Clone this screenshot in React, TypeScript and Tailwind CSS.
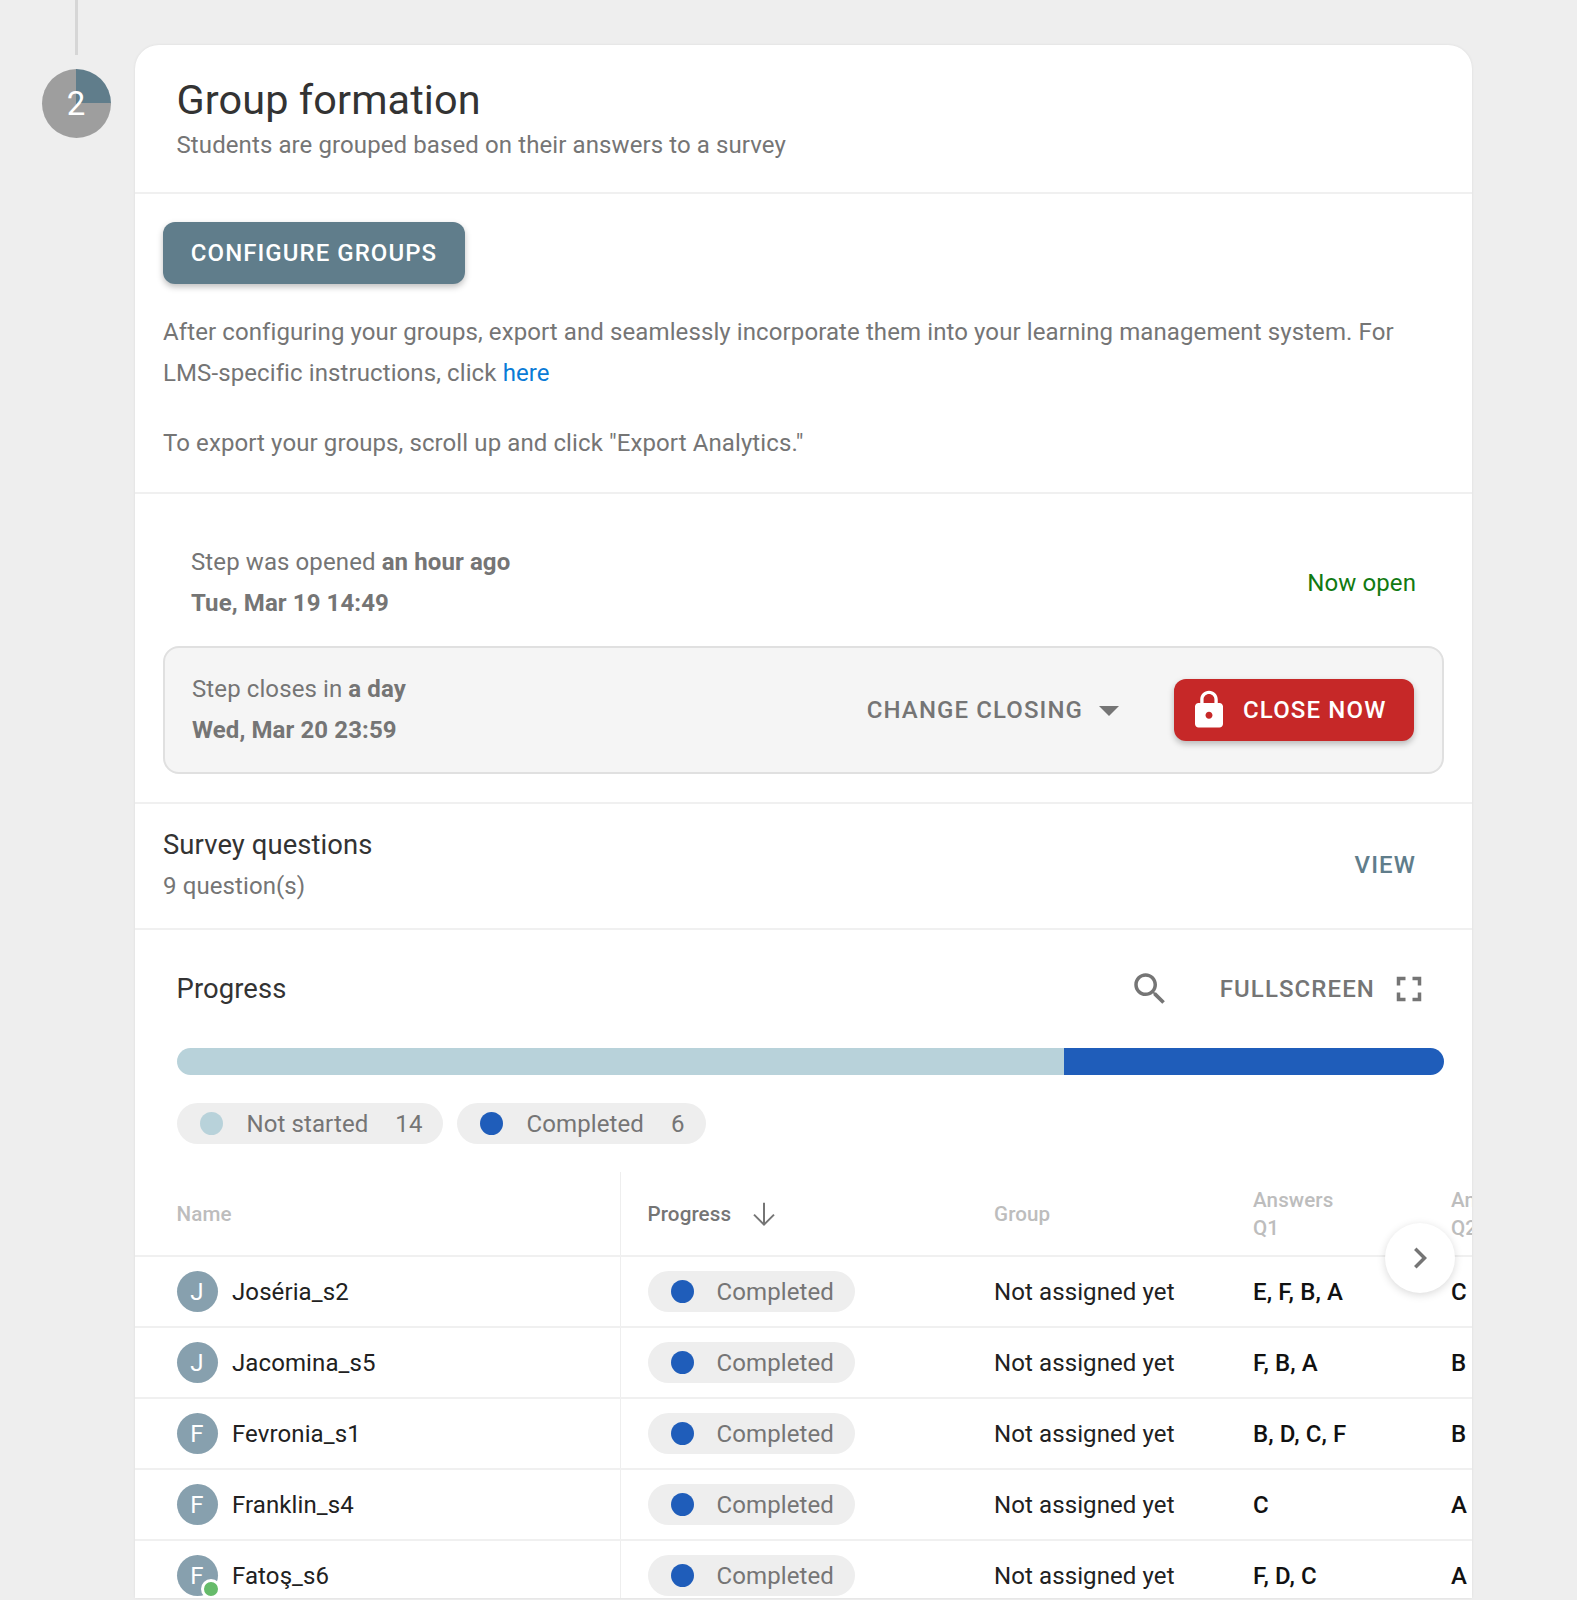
const dot = "w-[23px] h-[23px] rounded-full shrink-0";

function Icon({ d, className }: { d: string; className?: string }) {
  return (
    <svg viewBox="0 0 24 24" fill="currentColor" className={className}>
      <path d={d} />
    </svg>
  );
}

const rows = [
  { name: "Joséria_s2", answers: "E, F, B, A", next: "C" },
  { name: "Jacomina_s5", answers: "F, B, A", next: "B" },
  { name: "Fevronia_s1", answers: "B, D, C, F", next: "B" },
  { name: "Franklin_s4", answers: "C", next: "A" },
  { name: "Fatoş_s6", answers: "F, D, C", next: "A", online: true },
];

function Row({ name, answers, next, online }: { name: string; answers: string; next: string; online?: boolean }) {
  return (
    <div className="flex h-[71px] items-center border-b-2 border-[#f0f0f0] text-[24px] whitespace-nowrap">
      <div className="flex h-full w-[486px] shrink-0 items-center gap-[14.5px] border-r border-[#eeeeee] pl-[41.5px]">
        <div className="relative flex h-[41px] w-[41px] items-center justify-center rounded-full bg-[#87a0ae] text-[24px] text-white">
          {name[0]}
          {online && (
            <span className="absolute -bottom-[3px] -right-[3px] h-[20px] w-[20px] rounded-full border-[3px] border-white bg-[#66bb6a]" />
          )}
        </div>
        <span className="text-[#212121]">{name}</span>
      </div>
      <div className="w-[373px] shrink-0 pl-[26.5px]">
        <div className="flex h-[41px] w-[207px] items-center gap-[23px] rounded-full bg-[#eeeeee] pl-[23px] text-[#757575]">
          <span className={`${dot} bg-[#1f5dba]`} />
          Completed
        </div>
      </div>
      <div className="w-[259px] shrink-0 text-[#212121]">Not assigned yet</div>
      <div className="w-[198px] shrink-0 font-medium text-[#111111]">{answers}</div>
      <div className="font-medium text-[#111111]">{next}</div>
    </div>
  );
}

export default function App() {
  return (
    <div className="flex h-[1600px] overflow-hidden bg-[#eeeeee] font-['Roboto',sans-serif] tracking-[0.1px]">
      {/* Step marker */}
      <div className="flex w-[135px] shrink-0 flex-col items-center">
        <div className="ml-[17px] h-[55px] w-[3px] bg-[#d6d6d6]" />
        <div className="ml-[17px] mt-[14px] flex h-[69px] w-[69px] items-center justify-center rounded-full bg-[conic-gradient(#607d8b_0_25%,#9e9e9e_25%_100%)] text-[33px] text-white">
          2
        </div>
      </div>

      <div className="mt-[45px] h-[1553px] w-[1337px] shrink-0 overflow-hidden rounded-t-[24px] bg-white shadow-[0_0_3px_rgba(0,0,0,0.08)]">
        {/* Header */}
        <div className="h-[149px] border-b-2 border-[#f0f0f0] pl-[41.5px] pt-[29px]">
          <h1 className="text-[41.4px] leading-[52px] text-[#333333]">Group formation</h1>
          <p className="mt-[1px] text-[24px] leading-[36px] text-[#757575]">
            Students are grouped based on their answers to a survey
          </p>
        </div>

        {/* Configure */}
        <div className="h-[300px] border-b-2 border-[#f0f0f0] px-[28px] pt-[28px] text-[24px] leading-[41px] text-[#757575]">
          <button className="h-[62px] w-[302px] rounded-[12px] bg-[#607d8b] font-medium tracking-[1.05px] text-white shadow-[0_3px_6px_rgba(0,0,0,0.25)]">
            CONFIGURE GROUPS
          </button>
          <p className="mt-[28px]">
            After configuring your groups, export and seamlessly incorporate them into your learning management system. For LMS-specific instructions, click{" "}
            <span className="text-[#0a7bd6]">here</span>
          </p>
          <p className="mt-[29px]">To export your groups, scroll up and click "Export Analytics."</p>
        </div>

        {/* Schedule */}
        <div className="h-[310px] border-b-2 border-[#f0f0f0] px-[28px] pt-[48px] text-[24px] leading-[41px] text-[#757575]">
          <div className="flex items-center justify-between px-[28px]">
            <div>
              <div>
                Step was opened <b className="font-bold">an hour ago</b>
              </div>
              <div className="font-bold">Tue, Mar 19 14:49</div>
            </div>
            <span className="text-[#117a11]">Now open</span>
          </div>
          <div className="mt-[22px] flex h-[128px] items-center rounded-[16px] border-2 border-[#e0e0e0] bg-[#f5f5f5] pl-[27px] pr-[28px]">
            <div className="flex-1">
              <div>
                Step closes in <b className="font-bold">a day</b>
              </div>
              <div className="font-bold">Wed, Mar 20 23:59</div>
            </div>
            <span className="font-medium tracking-[1.1px]">CHANGE CLOSING</span>
            <Icon d="M7 10l5 5 5-5z" className="ml-[2px] h-[48px] w-[48px]" />
            <button className="ml-[41px] flex h-[62px] w-[240px] items-center gap-[13px] rounded-[12px] bg-[#c62828] pl-[14px] font-medium tracking-[1.15px] text-white shadow-[0_3px_6px_rgba(0,0,0,0.25)]">
              <Icon d="M18 8h-1V6c0-2.76-2.24-5-5-5S7 3.24 7 6v2H6c-1.1 0-2 .9-2 2v10c0 1.1.9 2 2 2h12c1.1 0 2-.9 2-2V10c0-1.1-.9-2-2-2zm-6 9c-1.1 0-2-.9-2-2s.9-2 2-2 2 .9 2 2-.9 2-2 2zm3.1-9H8.9V6c0-1.71 1.39-3.1 3.1-3.1 1.71 0 3.1 1.39 3.1 3.1v2z" className="h-[42px] w-[42px]" />
              CLOSE NOW
            </button>
          </div>
        </div>

        {/* Survey */}
        <div className="flex h-[126px] items-center justify-between border-b-2 border-[#f0f0f0] pl-[28px] pr-[56px] text-[24px] leading-[41px]">
          <div>
            <div className="text-[27.4px] text-[#333333]">Survey questions</div>
            <div className="text-[#757575]">9 question(s)</div>
          </div>
          <span className="-mt-[2px] font-medium tracking-[1.1px] text-[#607d8b]">VIEW</span>
        </div>

        {/* Progress */}
        <div className="relative">
          <div className="flex h-[118px] items-center pl-[41.5px] pr-[42px] text-[#757575]">
            <span className="flex-1 pt-[2px] text-[27.4px] text-[#333333]">Progress</span>
            <Icon d="M15.5 14h-.79l-.28-.27C15.41 12.59 16 11.11 16 9.5 16 5.91 13.09 3 9.5 3S3 5.91 3 9.5 5.91 16 9.5 16c1.61 0 3.09-.59 4.23-1.57l.27.28v.79l5 4.99L20.49 19l-4.99-5zm-6 0C7.01 14 5 11.99 5 9.5S7.01 5 9.5 5 14 7.01 14 9.5 11.99 14 9.5 14z" className="h-[42px] w-[42px]" />
            <span className="ml-[49px] text-[24px] font-medium tracking-[1.1px]">FULLSCREEN</span>
            <Icon d="M7 14H5v5h5v-2H7v-3zm-2-4h2V7h3V5H5v5zm12 7h-3v2h5v-5h-2v3zM14 5v2h3v3h2V5h-5z" className="ml-[13px] h-[42px] w-[42px]" />
          </div>

          <div className="ml-[41.5px] flex h-[27px] w-[1267px] overflow-hidden rounded-full">
            <div className="w-[887px] bg-[#b8d2da]" />
            <div className="flex-1 bg-[#1f5dba]" />
          </div>

          <div className="ml-[41.5px] mt-[28px] flex gap-[14px] text-[24px] text-[#757575]">
            <div className="flex h-[41px] w-[266px] items-center rounded-full bg-[#eeeeee] pl-[23px]">
              <span className={`${dot} bg-[#b8d2da]`} />
              <span className="ml-[24px]">Not started</span>
              <span className="ml-[27px]">14</span>
            </div>
            <div className="flex h-[41px] w-[249px] items-center rounded-full bg-[#eeeeee] pl-[23px]">
              <span className={`${dot} bg-[#1f5dba]`} />
              <span className="ml-[24px]">Completed</span>
              <span className="ml-[27px]">6</span>
            </div>
          </div>

          {/* Table */}
          <div className="mt-[28px] flex h-[85px] items-center border-b-2 border-[#f0f0f0] text-[20.6px] font-medium leading-[28px] text-[#bdbdbd] whitespace-nowrap">
            <div className="flex h-full w-[486px] shrink-0 items-center border-r border-[#eeeeee] pl-[41.5px]">Name</div>
            <div className="flex w-[373px] shrink-0 items-center gap-[18px] pl-[26.5px] text-[#757575]">
              Progress
              <svg viewBox="0 0 24 24" fill="none" stroke="currentColor" strokeWidth="1.6" className="h-[30px] w-[30px]">
                <path d="M12 3v17M4 12.5l8 8 8-8" />
              </svg>
            </div>
            <div className="w-[259px] shrink-0">Group</div>
            <div className="w-[198px] shrink-0">
              Answers
              <br />
              Q1
            </div>
            <div>
              Answers
              <br />
              Q2
            </div>
          </div>
          {rows.map((r) => (
            <Row key={r.name} {...r} />
          ))}

          <button className="absolute right-[17px] top-[293px] flex h-[70px] w-[70px] items-center justify-center rounded-full bg-white text-[#757575] shadow-[0_2px_8px_rgba(0,0,0,0.15)]">
            <Icon d="M10 6L8.59 7.41 13.17 12l-4.58 4.59L10 18l6-6z" className="h-[42px] w-[42px]" />
          </button>
        </div>
      </div>
    </div>
  );
}
